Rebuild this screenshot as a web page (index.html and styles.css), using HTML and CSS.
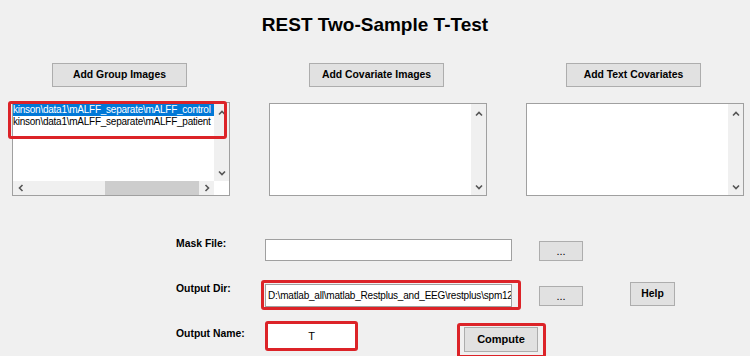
FILE: index.html
```html
<!DOCTYPE html>
<html lang="en">
<head>
<meta charset="utf-8">
<title>REST Two-Sample T-Test</title>
<link rel="stylesheet" href="styles.css">
</head>
<body>
<div class="app">
  <h1 class="title">REST Two-Sample T-Test</h1>

  <div class="groups">
    <div class="group">
      <button class="btn btn-add">Add Group Images</button>
      <div class="listbox">
        <div class="list-main">
          <div class="list-items">
            <div class="item selected"><span class="item-text">kinson\data1\mALFF_separate\mALFF_control</span></div>
            <div class="item"><span class="item-text">kinson\data1\mALFF_separate\mALFF_patient</span></div>
          </div>
          <div class="vscroll">
            <svg class="arrow" viewBox="0 0 8 8"><path d="M1 5.5 L4 2.5 L7 5.5" /></svg>
            <svg class="arrow" viewBox="0 0 8 8"><path d="M1 2.5 L4 5.5 L7 2.5" /></svg>
          </div>
        </div>
        <div class="hscroll">
          <svg class="arrow" viewBox="0 0 8 8"><path d="M5.5 1 L2.5 4 L5.5 7" /></svg>
          <div class="htrack"><div class="hthumb"></div></div>
          <svg class="arrow" viewBox="0 0 8 8"><path d="M2.5 1 L5.5 4 L2.5 7" /></svg>
          <div class="corner"></div>
        </div>
        <div class="annot annot-list"></div>
      </div>
    </div>

    <div class="group">
      <button class="btn btn-add">Add Covariate Images</button>
      <div class="listbox listbox-offset">
        <div class="list-main full">
          <div class="list-items"></div>
          <div class="vscroll">
            <svg class="arrow" viewBox="0 0 8 8"><path d="M1 5.5 L4 2.5 L7 5.5" /></svg>
            <svg class="arrow" viewBox="0 0 8 8"><path d="M1 2.5 L4 5.5 L7 2.5" /></svg>
          </div>
        </div>
      </div>
    </div>

    <div class="group">
      <button class="btn btn-add">Add Text Covariates</button>
      <div class="listbox listbox-offset">
        <div class="list-main full">
          <div class="list-items"></div>
          <div class="vscroll">
            <svg class="arrow" viewBox="0 0 8 8"><path d="M1 5.5 L4 2.5 L7 5.5" /></svg>
            <svg class="arrow" viewBox="0 0 8 8"><path d="M1 2.5 L4 5.5 L7 2.5" /></svg>
          </div>
        </div>
      </div>
    </div>
  </div>

  <div class="form">
    <div class="row row-mask">
      <div class="label">Mask File:</div>
      <div class="field field-wide"></div>
      <button class="btn btn-dots">...</button>
    </div>
    <div class="row row-dir">
      <div class="label">Output Dir:</div>
      <div class="field-wrap">
        <div class="field field-wide">D:\matlab_all\matlab_Restplus_and_EEG\restplus\spm12</div>
        <div class="annot annot-dir"></div>
      </div>
      <button class="btn btn-dots">...</button>
      <button class="btn btn-help">Help</button>
    </div>
    <div class="row row-name">
      <div class="label label-name">Output Name:</div>
      <div class="field field-name">T</div>
      <div class="compute-wrap">
        <button class="btn btn-compute">Compute</button>
        <div class="annot annot-compute"></div>
      </div>
    </div>
  </div>
</div>
</body>
</html>
```

FILE: styles.css
```css
html, body {
  margin: 0;
  padding: 0;
  background: #f0f0f0;
}

body {
  font-family: "Liberation Sans", Arial, sans-serif;
  color: #000;
  width: 750px;
  height: 356px;
  overflow: hidden;
}

.app {
  display: flex;
  flex-direction: column;
}

.title {
  margin: 14px 0 0 0;
  font-size: 19px;
  line-height: 22px;
  font-weight: bold;
  text-align: center;
}

.groups {
  display: flex;
  gap: 39px;
  padding-left: 12px;
  margin-top: 27px;
}

.group {
  width: 218px;
  display: flex;
  flex-direction: column;
  align-items: center;
}

.btn {
  font-family: "Liberation Sans", Arial, sans-serif;
  background: #e1e1e1;
  border: 1px solid #adadad;
  color: #000;
  padding: 0;
  margin: 0;
  box-sizing: border-box;
  font-size: 10.4px;
  font-weight: bold;
  line-height: 1;
  display: flex;
  align-items: center;
  justify-content: center;
}

.btn-add {
  width: 135px;
  height: 24px;
  margin-left: -3px;
}

.listbox {
  position: relative;
  width: 218px;
  height: 94px;
  margin-top: 15px;
  box-sizing: border-box;
  border: 1px solid #a0a0a0;
  background: #fff;
  display: flex;
  flex-direction: column;
}

.listbox-offset {
  margin-top: 16px;
  height: 93px;
}

.list-main {
  display: flex;
  height: 78px;
}

.list-main.full {
  height: 100%;
}

.list-items {
  flex: 1;
  overflow: hidden;
  padding-top: 1px;
}

.item {
  height: 12px;
  font-size: 10px;
  letter-spacing: -0.25px;
  line-height: 12px;
  white-space: nowrap;
  overflow: hidden;
}

.item-text {
  display: inline-block;
}

.item.selected {
  background: #0078d7;
  color: #fff;
}

.vscroll {
  width: 15px;
  background: #f0f0f0;
  display: flex;
  flex-direction: column;
  justify-content: space-between;
  align-items: center;
  padding: 6px 0 4px 0;
  box-sizing: border-box;
}

.arrow {
  width: 8px;
  height: 8px;
  fill: none;
  stroke: #555555;
  stroke-width: 1.6;
}

.hscroll {
  height: 14px;
  background: #f0f0f0;
  display: flex;
  align-items: center;
  padding-left: 4px;
}

.htrack {
  flex: 1;
  height: 100%;
  display: flex;
  justify-content: flex-end;
  padding: 0 4px 0 0;
}

.hthumb {
  width: 94px;
  height: 100%;
  background: #cdcdcd;
}

.hscroll .arrow + .htrack + .arrow {
  margin-right: 3px;
}

.corner {
  width: 15px;
  height: 100%;
  background: #fff;
}

.annot {
  position: absolute;
  border: 3px solid #dc2328;
  border-radius: 3px;
  box-sizing: border-box;
  pointer-events: none;
}

.annot-list {
  left: -5px;
  top: -2px;
  right: 2px;
  height: 38px;
}

.form {
  display: flex;
  flex-direction: column;
  padding-left: 176px;
  margin-top: 41px;
}

.row {
  display: flex;
  align-items: flex-start;
}

.row-dir {
  margin-top: 21px;
}

.row-name {
  margin-top: 14px;
}

.label {
  width: 89px;
  font-size: 10.4px;
  line-height: 14px;
  font-weight: bold;
}

.label-name {
  margin-top: 6px;
}

.field {
  box-sizing: border-box;
  background: #fff;
  border: 1px solid #a0a0a0;
  font-size: 10px;
  letter-spacing: -0.2px;
  white-space: nowrap;
  overflow: hidden;
}

.field-wide {
  width: 247px;
  height: 22px;
  margin-top: 2px;
  line-height: 20px;
  padding-left: 2px;
}

.field-wrap {
  position: relative;
}

.row-dir .field-wide {
  height: 23px;
  line-height: 21px;
}

.annot-dir {
  left: -4px;
  top: -2px;
  right: -9px;
  bottom: -3px;
}

.btn-dots {
  width: 44px;
  height: 20px;
  margin-left: 27px;
  margin-top: 4px;
  font-weight: normal;
  font-size: 11px;
  align-items: flex-end;
  padding-bottom: 3px;
}

.btn-help {
  width: 45px;
  height: 24px;
  margin-left: 47px;
}

.field-name {
  width: 93px;
  height: 30px;
  border: 3px solid #dc2328;
  border-radius: 3px;
  line-height: 24px;
  font-size: 11px;
  text-align: center;
}

.compute-wrap {
  position: relative;
  margin-left: 106px;
  margin-top: 6px;
}

.btn-compute {
  width: 74px;
  height: 25px;
  font-size: 11px;
}

.annot-compute {
  left: -7px;
  top: -4px;
  right: -8px;
  bottom: -6px;
}
```
